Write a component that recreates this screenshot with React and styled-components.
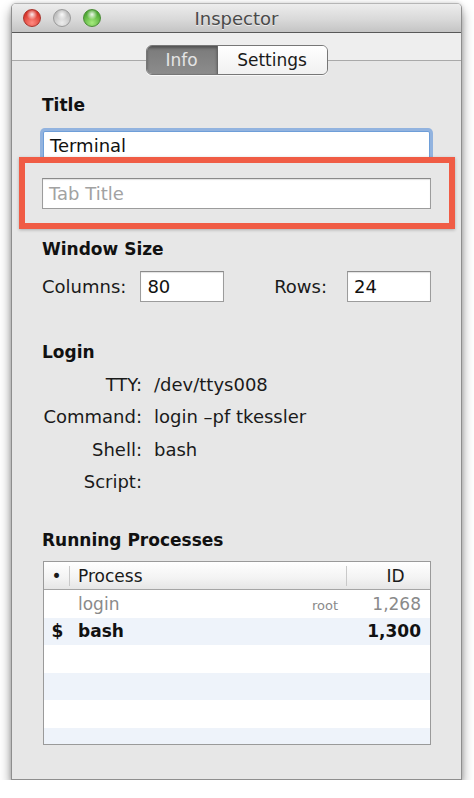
import React from 'react';
import styled, { createGlobalStyle } from 'styled-components';

const GlobalStyle = createGlobalStyle`
    html, body {
        margin: 0;
        padding: 0;
        background: #FFFFFF;
    }
    body {
        font-family: "DejaVu Sans", "Liberation Sans", sans-serif;
        color: #1A1A1A;
    }
`

const Window = styled.div`
    box-sizing: border-box;
    width: 451px;
    margin: 3px 0 0 11px;
    border: 1px solid #8E8E8E;
    border-top-color: #B5B5B5;
    border-radius: 5px 5px 0 0;
    box-shadow: 0px 7px 12px rgba(0, 0, 0, 0.45), 0 0 4px rgba(0, 0, 0, 0.15);
    overflow: hidden;
`

const TitleBar = styled.div`
    height: 28px;
    display: grid;
    grid-template-columns: 1fr auto 1fr;
    align-items: center;
    background: linear-gradient(180deg, #EDEDED 0%, #D9D9D9 55%, #C4C4C4 100%);
    border-bottom: 1px solid #585858;
`

const Lights = styled.div`
    display: flex;
    align-items: center;
    gap: 12px;
    padding-left: 11px;
`

const Light = styled.span`
    width: 18px;
    height: 18px;
    border-radius: 50%;
    box-sizing: border-box;
    border: 1px solid ${p => p.$edge};
    background: radial-gradient(circle at 50% 28%, rgba(255,255,255,0.9) 0%, rgba(255,255,255,0) 38%),
                radial-gradient(circle at 50% 80%, ${p => p.$glow} 0%, ${p => p.$base} 70%);
`

const WindowTitle = styled.div`
    font-size: 18px;
    color: #4A4A4A;
    text-shadow: 0 1px 0 rgba(255, 255, 255, 0.6);
`

const Body = styled.div`
    display: flex;
    flex-direction: column;
    padding: 0 30px 34px 30px;
    background: linear-gradient(180deg, #EEEEEE 0px, #EEEEEE 27px, #A9A9A9 27px, #A9A9A9 28px, #E7E7E7 28px);
`

const Segmented = styled.div`
    align-self: center;
    display: flex;
    margin-top: 12px;
    height: 30px;
    border: 1px solid #777777;
    border-radius: 6px;
    overflow: hidden;
    box-sizing: border-box;
    box-shadow: 0 1px 0 rgba(255, 255, 255, 0.7);
`

const Segment = styled.div`
    width: ${p => p.$w}px;
    display: flex;
    align-items: center;
    justify-content: center;
    font-size: 17px;
    color: ${p => (p.$active ? '#E4E4E4' : '#1A1A1A')};
    background: ${p => (p.$active
        ? 'linear-gradient(180deg, #7A7A7A 0%, #8C8C8C 100%)'
        : 'linear-gradient(180deg, #FFFFFF 0%, #F1F1F1 100%)')};
    box-shadow: ${p => (p.$active ? 'inset 0 2px 3px rgba(0,0,0,0.35)' : 'none')};
    border-right: ${p => (p.$active ? '1px solid #666666' : 'none')};
`

const Heading = styled.div`
    font-size: 17px;
    font-weight: 700;
    line-height: 20px;
    margin-top: ${p => p.$top}px;
    color: #111111;
`

const TextField = styled.div`
    box-sizing: border-box;
    height: ${p => p.$h}px;
    width: ${p => (p.$w ? `${p.$w}px` : '100%')};
    display: flex;
    align-items: center;
    padding-left: 6px;
    background: #FFFFFF;
    border: 1px solid ${p => (p.$focus ? '#6E9ED8' : '#9C9C9C')};
    border-top-color: ${p => (p.$focus ? '#6E9ED8' : '#8A8A8A')};
    box-shadow: ${p => (p.$focus
        ? '0 0 0 3px rgba(118, 162, 220, 0.75)'
        : 'inset 0 1px 1px rgba(0,0,0,0.12)')};
    border-radius: ${p => (p.$focus ? '2px' : '0')};
    font-size: 18px;
    color: ${p => (p.$placeholder ? '#A2A2A2' : '#111111')};
`

const FocusWrap = styled.div`
    margin-top: 16px;
    margin-left: 1px;
    margin-right: 1px;
`

const Highlight = styled.div`
    margin: -2px -24px 0 -23px;
    padding: 15px 18px 14px 17px;
    border: 6px solid #F05C45;
    box-shadow: 0 1px 3px rgba(0, 0, 0, 0.25);
    position: relative;
`

const SizeRow = styled.div`
    display: flex;
    justify-content: space-between;
    align-items: center;
    margin-top: 12px;
`

const SizeGroup = styled.div`
    display: flex;
    align-items: center;
    gap: ${p => p.$gap}px;
    font-size: 18px;
`

const InfoGrid = styled.div`
    display: grid;
    grid-template-columns: 100px 1fr;
    column-gap: 12px;
    grid-auto-rows: 32.5px;
    align-items: center;
    margin-top: 6px;
    font-size: 18px;
`

const InfoLabel = styled.div`
    text-align: right;
    color: #1A1A1A;
`

const InfoValue = styled.div`
    color: #1A1A1A;
`

const Table = styled.div`
    margin-top: 11px;
    height: 184px;
    box-sizing: border-box;
    border: 1px solid #9A9A9A;
    background: #FFFFFF;
    margin-left: 1px;
    overflow: hidden;
`

const HeaderRow = styled.div`
    display: grid;
    grid-template-columns: 25px 1fr 84px;
    height: 27px;
    align-items: center;
    background: linear-gradient(180deg, #FFFFFF 0%, #F3F3F3 60%, #E6E6E6 100%);
    border-bottom: 1px solid #A5A5A5;
    font-size: 17px;
`

const HeaderCell = styled.div`
    height: 20px;
    display: flex;
    align-items: center;
    justify-content: ${p => p.$align || 'flex-start'};
    padding-left: ${p => p.$pad || 0}px;
    border-left: ${p => (p.$divider ? '1px solid #C9C9C9' : 'none')};
`

const Row = styled.div`
    display: grid;
    grid-template-columns: 25px 1fr 84px;
    height: 27.5px;
    align-items: center;
    background: ${p => (p.$stripe ? '#EEF3FA' : '#FFFFFF')};
    font-size: 17px;
    font-weight: ${p => (p.$bold ? 700 : 400)};
    color: ${p => (p.$dim ? '#8A8A8A' : '#111111')};
`

const MarkCell = styled.div`
    text-align: center;
    padding-left: 2px;
`

const ProcessCell = styled.div`
    display: flex;
    justify-content: space-between;
    align-items: baseline;
    padding: 0 8px 0 9px;
`

const Owner = styled.span`
    font-size: 13px;
    font-weight: 400;
    color: #8A8A8A;
`

const IdCell = styled.div`
    text-align: right;
    padding-right: 9px;
`

const processes = [
    { mark: '', name: 'login', owner: 'root', id: '1,268', dim: true },
    { mark: '$', name: 'bash', owner: '', id: '1,300', bold: true },
    {}, {}, {}, {}
];

const loginInfo = [
    ['TTY:', '/dev/ttys008'],
    ['Command:', 'login \u2013pf tkessler'],
    ['Shell:', 'bash'],
    ['Script:', '']
];

const App = () => {
    return (
        <>
            <GlobalStyle />
            <Window>
                <TitleBar>
                    <Lights>
                        <Light $base="#D8352B" $glow="#FF8A80" $edge="#A8332C" />
                        <Light $base="#BDBDBD" $glow="#EDEDED" $edge="#9A9A9A" />
                        <Light $base="#4EA834" $glow="#A6EB7E" $edge="#4A8C36" />
                    </Lights>
                    <WindowTitle>Inspector</WindowTitle>
                    <div />
                </TitleBar>
                <Body>
                    <Segmented>
                        <Segment $w={70} $active>Info</Segment>
                        <Segment $w={109}>Settings</Segment>
                    </Segmented>

                    <Heading $top={20}>Title</Heading>
                    <FocusWrap>
                        <TextField $h={28} $focus>Terminal</TextField>
                    </FocusWrap>
                    <Highlight>
                        <TextField $h={31} $placeholder>Tab Title</TextField>
                    </Highlight>

                    <Heading $top={10}>Window Size</Heading>
                    <SizeRow>
                        <SizeGroup $gap={14}>
                            Columns:
                            <TextField $h={31} $w={84}>80</TextField>
                        </SizeGroup>
                        <SizeGroup $gap={20}>
                            Rows:
                            <TextField $h={31} $w={84}>24</TextField>
                        </SizeGroup>
                    </SizeRow>

                    <Heading $top={40}>Login</Heading>
                    <InfoGrid>
                        {loginInfo.map(([label, value]) => (
                            <React.Fragment key={label}>
                                <InfoLabel>{label}</InfoLabel>
                                <InfoValue>{value}</InfoValue>
                            </React.Fragment>
                        ))}
                    </InfoGrid>

                    <Heading $top={32}>Running Processes</Heading>
                    <Table>
                        <HeaderRow>
                            <HeaderCell $align="center">&bull;</HeaderCell>
                            <HeaderCell $divider $pad={8}>Process</HeaderCell>
                            <HeaderCell $divider $align="center" $pad={14}>ID</HeaderCell>
                        </HeaderRow>
                        {processes.map((p, i) => (
                            <Row key={i} $stripe={i % 2 === 1} $bold={p.bold} $dim={p.dim}>
                                <MarkCell>{p.mark}</MarkCell>
                                <ProcessCell>
                                    <span>{p.name}</span>
                                    <Owner>{p.owner}</Owner>
                                </ProcessCell>
                                <IdCell>{p.id}</IdCell>
                            </Row>
                        ))}
                    </Table>
                </Body>
            </Window>
        </>
    )
}

export default App
